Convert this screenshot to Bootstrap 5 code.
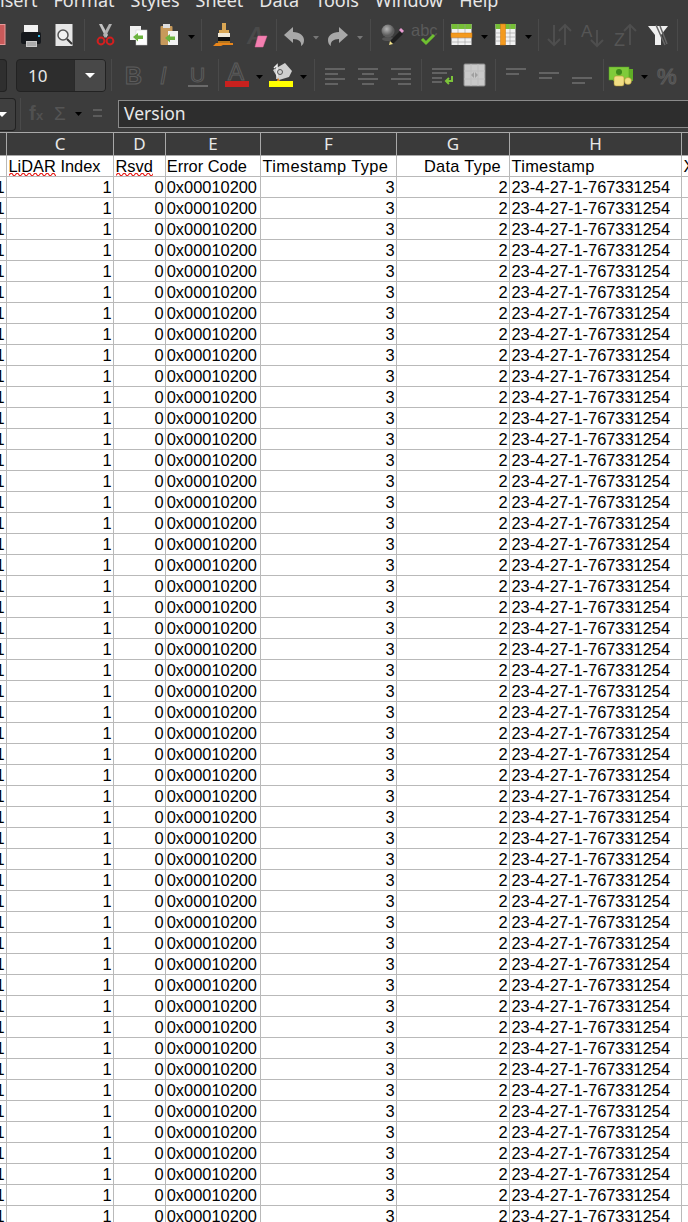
<!DOCTYPE html>
<html lang="en">
<head>
<meta charset="utf-8">
<title>Spreadsheet</title>
<link href="https://cdn.jsdelivr.net/npm/bootstrap@5.3.0/dist/css/bootstrap.min.css" rel="stylesheet">
<style>
html,body{height:1222px;overflow:hidden;background:#3c3c3c;}
body{font-family:"Noto Sans",sans-serif;}
.menu-strip{height:15px;overflow:hidden;color:#e6e6e6;font-size:18px;line-height:18px;gap:16px;margin-left:-12.5px;}
.menu-strip span{display:block;margin-top:-9px;white-space:nowrap;}
.bar-row{height:40px;}
.bar-row svg{display:block;flex:none;}
.bar-row text{font-family:"Liberation Sans",sans-serif;}
.bar-row3{height:37px;}
.bar-row3 svg{display:block;flex:none;}
.bar-row3 text{font-family:"Liberation Sans",sans-serif;}
.tb-sep{flex:none;width:1px;height:32px;background:#4a4a4a;}
.cut-box{flex:none;width:7px;height:33px;margin-top:4px;margin-right:9px;background:#2f2f2f;border:1px solid #222;border-left:0;border-radius:0 4px 4px 0;}
.size-combo{flex:none;width:90px;height:33px;margin-top:4px;margin-right:5px;background:#2d2d2d;border:1px solid #222;border-radius:4px;overflow:hidden;color:#e8e8e8;font-size:17px;}
.size-val{width:57px;padding-left:11px;line-height:31px;}
.size-btn{background:#484848;border-left:1px solid #2a2a2a;}
.size-btn i{display:block;border-left:5px solid transparent;border-right:5px solid transparent;border-top:5px solid #fff;}
.name-cut{flex:none;width:16px;height:33px;margin-top:3px;margin-right:4px;background:#3f3f3f;border:1px solid #222;border-left:0;border-radius:0 4px 4px 0;}
.name-cut i{display:block;width:0;margin-left:-3px;border-left:5px solid transparent;border-right:5px solid transparent;border-top:5px solid #fff;}
.formula-box{height:28px;margin-top:5px;margin-bottom:4px;background:#2d2d2d;border:1px solid #8a8a8a;border-right:0;color:#e8e8e8;font-size:17.500px;line-height:24px;padding-left:5px;}
.sheet-wrap{overflow:hidden;background:#fff;}
table.sheet{table-layout:fixed;width:881px;margin:0 0 0 -100px;border-collapse:collapse;font-family:"Liberation Sans",sans-serif;font-size:16.4px;color:#000;}
table.sheet th,table.sheet td{height:21px;padding:0 1.5px;line-height:20px;border:1px solid #b9b9b9;white-space:nowrap;overflow:hidden;font-weight:400;}
table.sheet thead th{height:23px;background:#3a3a3a;color:#e8e8e8;text-align:center;font-family:"Noto Sans",sans-serif;font-size:17px;border-color:#a8a8a8;line-height:20px;}
table.sheet tbody{background:#fff;}
table.sheet td.cell-code{padding-left:.75px;}
.num{text-align:right;}
.squig{padding-bottom:1px;background:url("data:image/svg+xml,%3Csvg xmlns='http://www.w3.org/2000/svg' width='6' height='3'%3E%3Cpath d='M0 2.500L1.500 .5 3 .5 4.500 2.500 6 2.500' fill='none' stroke='%23e8201c' stroke-width='1.200'/%3E%3C/svg%3E") repeat-x left bottom;}
.hd-wide{letter-spacing:.4px;}
.hd-wide2{letter-spacing:.3px;}
table.sheet td.hd-pad{padding-right:8px;}
.c-b{width:106px}.c-c{width:107px}.c-d{width:52px}.c-e{width:95px}.c-f{width:136px}.c-g{width:113px}.c-h{width:172px}.c-i{width:100px}
</style>
</head>
<body class="m-0">
<div class="menu-strip d-flex">
<span>Insert</span><span>Format</span><span>Styles</span><span>Sheet</span><span>Data</span><span>Tools</span><span>Window</span><span>Help</span>
</div>

<!-- toolbar 1 -->
<div class="bar-row d-flex align-items-center overflow-hidden">
<svg width="14" height="40" viewBox="0 15 14 40"><rect x="-8" y="24.5" width="13" height="20" fill="#c95a5a" stroke="#e89a9a"/></svg>
<svg width="34" height="40" viewBox="14 15 34 40"><rect x="24" y="25" width="14" height="9" fill="#f2f2f2"/><rect x="21" y="32" width="20" height="12" rx="2" fill="#15181c"/><rect x="38" y="35" width="2" height="2" fill="#29b6e8"/><rect x="26" y="41" width="11" height="6" fill="#c9c9c9"/><path d="M27 43h9M27 45h9" stroke="#8f8f8f"/></svg>
<svg width="36" height="40" viewBox="48 15 36 40"><rect x="55.5" y="24" width="17" height="22" fill="#e6e6e6"/><circle cx="63" cy="35" r="5" fill="#f2f2f2" stroke="#555" stroke-width="1.5"/><path d="M67 39l5 5" stroke="#333" stroke-width="2"/></svg>
<span class="tb-sep"></span>
<svg width="36" height="40" viewBox="85 15 36 40"><path d="M99 24l7 14 2-3-6-11z" fill="#c4c4c4"/><path d="M112 24l-7 14-2-3 6-11z" fill="#b0b0b0"/><circle cx="101" cy="41" r="3.4" fill="none" stroke="#d21f1f" stroke-width="2"/><circle cx="110" cy="41" r="3.4" fill="none" stroke="#d21f1f" stroke-width="2"/></svg>
<svg width="32" height="40" viewBox="121 15 32 40"><rect x="130" y="26" width="11" height="14" fill="#f0f0f0"/><rect x="136" y="30" width="11" height="15" fill="#fff" stroke="#ccc" stroke-width=".5"/><path d="M133 37l5-4v2.5h5v3.5h-5v2.500z" fill="#6cb33f"/></svg>
<svg width="48" height="40" viewBox="153 15 48 40"><rect x="160.500" y="26" width="12" height="19" rx="1" fill="#c79a5b"/><rect x="163" y="24" width="7" height="4" fill="#ddd"/><rect x="168" y="31" width="10" height="14" fill="#f2f2f2"/><path d="M165 38l5-4v2.500h5v3.500h-5v2.500z" fill="#6cb33f"/><path d="M188 35h7l-3.500 4z" fill="#000"/></svg>
<span class="tb-sep"></span>
<svg width="38" height="40" viewBox="202 15 38 40"><rect x="222" y="23" width="4" height="8" fill="#d9a654"/><rect x="219" y="30" width="10" height="3" fill="#d9a654"/><rect x="218" y="33" width="12" height="4" fill="#f0e9d8"/><rect x="218" y="37" width="12" height="4" fill="#111"/><path d="M213 46l3-3h17v2h-10l-2 1z" fill="#e8851a"/><path d="M218 41h12v2h-12z" fill="#b5761e"/></svg>
<svg width="36" height="40" viewBox="240 15 36 40"><text x="247" y="44" font-size="23" font-weight="700" font-style="italic" fill="#4a4a4a">A</text><path d="M258 36h9l-4 11h-8z" fill="#f47fb0" stroke="#e06a9c" stroke-width=".5"/></svg>
<span class="tb-sep"></span>
<svg width="44" height="40" viewBox="278 15 44 40"><path d="M285 35l9-8v5c7 0 11 4 11 8 0 3-1 5-3 6 1-4-2-7-8-7v4z" fill="#a8a8a8"/><path d="M314 36h6l-3 3.500z" fill="#767676"/></svg>
<svg width="49" height="40" viewBox="322 15 49 40"><path d="M349 35l-9-8v5c-7 0-11 4-11 8 0 3 1 5 3 6-1-4 2-7 8-7v4z" fill="#a8a8a8"/><path d="M358 36h6l-3 3.500z" fill="#767676"/></svg>
<span class="tb-sep"></span>
<svg width="38" height="40" viewBox="373 15 38 40"><defs><radialGradient id="ballg" cx=".4" cy=".35"><stop offset="0" stop-color="#b5b5b5"/><stop offset="1" stop-color="#5c5c5c"/></radialGradient></defs><circle cx="390" cy="31" r="6.500" fill="url(#ballg)"/><ellipse cx="390" cy="39" rx="6" ry="2" fill="#555"/><path d="M391 44l2-4 9-9 3 3-9 9z" fill="#1f1f1f"/><path d="M391 45l1-4 3 3z" fill="#f2e28a"/><path d="M401 30l2-2 3 3-2 2z" fill="#e79ad0"/></svg>
<svg width="34" height="40" viewBox="411 15 34 40"><text x="413" y="36" font-size="16.500" fill="#5a5a5a">abc</text><path d="M424 39l4 4 8-8" fill="none" stroke="#6fc030" stroke-width="3"/></svg>
<span class="tb-sep"></span>
<svg width="45" height="40" viewBox="447 15 45 40"><rect x="454.500" y="24" width="20" height="21" fill="#f1f1f1"/><rect x="454.500" y="24" width="20" height="5" fill="#76bf36"/><path d="M461 24v21M468 24v21M454 38h21M454 42h21" stroke="#9a9a9a" stroke-width=".6"/><rect x="454" y="33" width="21" height="4.500" fill="#f39a1e" stroke="#c9740e" stroke-width=".5"/><path d="M484 35h7l-3.500 4z" fill="#000"/></svg>
<svg width="49" height="40" viewBox="492 15 49 40"><rect x="498.500" y="24" width="20" height="21" fill="#f1f1f1"/><rect x="498.500" y="24" width="20" height="5" fill="#76bf36"/><path d="M498 33h21M498 37h21M498 41h21M513 24v21" stroke="#9a9a9a" stroke-width=".6"/><rect x="503.500" y="24" width="5" height="21" fill="#f39a1e" stroke="#c9740e" stroke-width=".5"/><path d="M528 35h7l-3.500 4z" fill="#000"/></svg>
<span class="tb-sep"></span>
<svg width="37" height="40" viewBox="543 15 37 40"><path d="M558 25v20M552 39l6 6 6-6M569 45v-20M563 31l6-6 6 6" fill="none" stroke="#4e4e4e" stroke-width="2"/></svg>
<svg width="38" height="40" viewBox="580 15 38 40"><text x="585" y="37" font-size="17" fill="#555">A</text><path d="M601 30v16M595 40l6 6 6-6" fill="none" stroke="#4e4e4e" stroke-width="2"/></svg>
<svg width="28" height="40" viewBox="618 15 28 40"><text x="618" y="46" font-size="18" fill="#555">Z</text><path d="M634 45v-20M628 31l6-6 6 6" fill="none" stroke="#4e4e4e" stroke-width="2"/></svg>
<svg width="35" height="40" viewBox="646 15 35 40"><path d="M652 26h20l-7 9v10h-6v-10z" fill="#f0f0f0"/><path d="M660 25l9 20M664 26l7 18" stroke="#666" stroke-width="1.500"/></svg>
<span class="tb-sep"></span>
</div>

<!-- toolbar 2 -->
<div class="bar-row d-flex overflow-hidden">
<div class="cut-box"></div>
<div class="size-combo d-flex"><div class="size-val">10</div><div class="size-btn flex-grow-1 d-flex align-items-center justify-content-center"><i></i></div></div>
<span class="tb-sep align-self-center"></span>
<svg width="38" height="40" viewBox="112 55 38 40"><text x="125" y="84" font-size="23.500" font-weight="700" fill="#3c3c3c" stroke="#5c5c5c">B</text></svg>
<svg width="28" height="40" viewBox="150 55 28 40"><text x="160" y="84" font-size="23.500" font-style="italic" fill="#3c3c3c" stroke="#5c5c5c">I</text></svg>
<svg width="40" height="40" viewBox="178 55 40 40"><text x="190" y="82" font-size="21" fill="#3c3c3c" stroke="#5c5c5c">U</text><rect x="188" y="85" width="20" height="2" fill="#6a6a6a"/></svg>
<span class="tb-sep align-self-center"></span>
<svg width="49" height="40" viewBox="219 55 49 40"><text x="228" y="80" font-size="24" fill="#3e3e3e" stroke="#5c5c5c">A</text><rect x="225" y="81" width="24" height="6" fill="#c9211e"/><path d="M256 75h7l-3.500 4z" fill="#000"/></svg>
<svg width="46" height="40" viewBox="268 55 46 40"><path d="M273 70l12-7 7 8-3 6-10 3z" fill="#cfcfcf"/><path d="M274 68l3-3v14" fill="none" stroke="#eee" stroke-width="1.500"/><circle cx="280" cy="72" r="2.500" fill="none" stroke="#555"/><path d="M277 81l1-3 2 3z" fill="#f28a1e"/><rect x="269" y="81" width="24" height="6" fill="#ffff00"/><path d="M300 75h7l-3.500 4z" fill="#000"/></svg>
<span class="tb-sep align-self-center"></span>
<svg width="37" height="40" viewBox="315 55 37 40"><path d="M325 69h20M325 74h13M325 79h20M325 84h13" stroke="#707070" stroke-width="1.500"/></svg>
<svg width="33" height="40" viewBox="352 55 33 40"><path d="M358 69h20M362 74h12M358 79h20M362 84h12" stroke="#707070" stroke-width="1.500"/></svg>
<svg width="36" height="40" viewBox="385 55 36 40"><path d="M391 69h20M398 74h13M391 79h20M398 84h13" stroke="#707070" stroke-width="1.500"/></svg>
<span class="tb-sep align-self-center"></span>
<svg width="36" height="40" viewBox="422 55 36 40"><path d="M432 69h20M432 73h15M432 78h10M432 82h10" stroke="#707070" stroke-width="1.500"/><path d="M452 76v5h-5M449 78l-3 3 3 3" fill="none" stroke="#7cc43a" stroke-width="2"/></svg>
<svg width="37" height="40" viewBox="458 55 37 40"><rect x="464" y="64" width="21" height="22" rx="1" fill="#c9c9c9" stroke="#8a8a8a"/><path d="M471 64v22M478 64v22M464 71h21M464 79h21" stroke="#bdbdbd"/><path d="M474 72l-3 3 3 3zM475 72l3 3-3 3z" fill="#a0a0a0"/></svg>
<span class="tb-sep align-self-center"></span>
<svg width="37" height="40" viewBox="496 55 37 40"><path d="M506 69h20M506 74h13" stroke="#707070" stroke-width="1.500"/></svg>
<svg width="33" height="40" viewBox="533 55 33 40"><path d="M539 73h20M539 78h13" stroke="#707070" stroke-width="1.500"/></svg>
<svg width="37" height="40" viewBox="566 55 37 40"><path d="M572 78h20M572 83h13" stroke="#707070" stroke-width="1.500"/></svg>
<span class="tb-sep align-self-center"></span>
<svg width="48" height="40" viewBox="604 55 48 40"><rect x="613" y="69" width="20" height="12" fill="#5fae26"/><rect x="609" y="67" width="20" height="13" fill="#7fcb3a" stroke="#4f9a22" stroke-width=".5"/><circle cx="619" cy="72" r="3" fill="#3d8a1b"/><rect x="614" y="76" width="10" height="10" rx="2" fill="#f1dd84" stroke="#a88e2a" stroke-width=".5"/><circle cx="628" cy="81" r="3.500" fill="#f1dd84" stroke="#a88e2a" stroke-width=".5"/><path d="M641 75h7l-3.500 4z" fill="#000"/></svg>
<svg width="36" height="40" viewBox="652 55 36 40"><text x="657" y="84" font-size="22" fill="#3c3c3c" stroke="#5c5c5c">%</text></svg>
</div>

<!-- formula bar -->
<div class="bar-row3 d-flex overflow-hidden">
<div class="name-cut d-flex align-items-center"><i></i></div>
<span class="tb-sep align-self-center"></span>
<svg width="97" height="37" viewBox="21 95 97 37"><text x="29" y="120" font-size="20" font-weight="700" fill="#505050">f</text><text x="36" y="120" font-size="13" font-weight="700" fill="#505050">x</text><text x="54" y="120" font-size="19" fill="#555">Σ</text><path d="M75 112h7l-3.500 4z" fill="#000"/><path d="M93 110h9M93 116h9" stroke="#5c5c5c" stroke-width="2"/></svg>
<div class="formula-box flex-grow-1">Version</div>
</div>

<!-- sheet -->
<div class="sheet-wrap">
<table class="sheet">
<colgroup><col class="c-b"><col class="c-c"><col class="c-d"><col class="c-e"><col class="c-f"><col class="c-g"><col class="c-h"><col class="c-i"></colgroup>
<thead><tr><th>B</th><th>C</th><th>D</th><th>E</th><th>F</th><th>G</th><th>H</th><th></th></tr></thead>
<tbody id="sheetBody">
<tr><td></td><td><span class="squig">LiDAR</span> Index</td><td><span class="squig">Rsvd</span></td><td class="cell-code">Error Code</td><td class="hd-wide">Timestamp Type</td><td class="num hd-pad hd-wide2">Data Type</td><td class="hd-wide2">Timestamp</td><td>X</td></tr>
</tbody>
</table>
</div>
<script>
var tb=document.getElementById('sheetBody'),h='';
for(var i=0;i<50;i++){h+='<tr><td class="num">1</td><td class="num">1</td><td class="num">0</td><td class="cell-code">0x00010200</td><td class="num">3</td><td class="num">2</td><td>23-4-27-1-767331254</td><td></td></tr>';}
tb.insertAdjacentHTML('beforeend',h);
</script>
<script src="https://cdn.jsdelivr.net/npm/bootstrap@5.3.0/dist/js/bootstrap.bundle.min.js"></script>
</body>
</html>
